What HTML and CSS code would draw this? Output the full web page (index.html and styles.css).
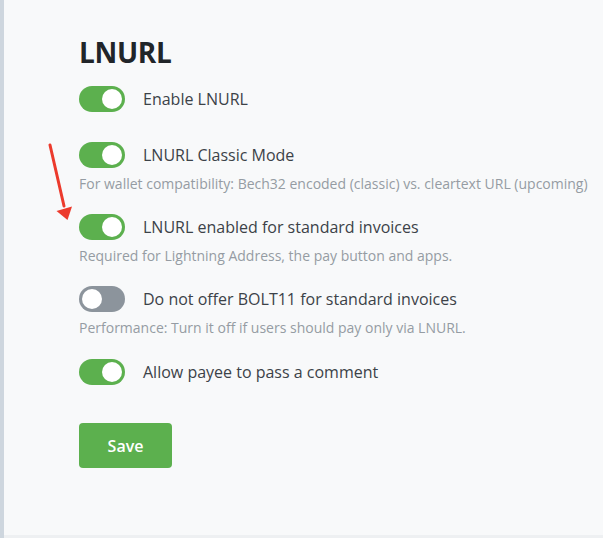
FILE: index.html
```html
<!DOCTYPE html>
<html>
<head>
<meta charset="utf-8">
<link rel="stylesheet" href="styles.css">
</head>
<body>
<div class="page">
  <div class="sidebar-edge"></div>
  <main class="content">
    <h2 class="title">LNURL</h2>
    <div class="group">
      <div class="row"><span class="toggle on"><span class="knob"></span></span><span class="label">Enable LNURL</span></div>
    </div>
    <div class="group has-help">
      <div class="row"><span class="toggle on"><span class="knob"></span></span><span class="label">LNURL Classic Mode</span></div>
      <div class="help">For wallet compatibility: Bech32 encoded (classic) vs. cleartext URL (upcoming)</div>
    </div>
    <div class="group has-help">
      <div class="row"><span class="toggle on"><span class="knob"></span></span><span class="label">LNURL enabled for standard invoices</span></div>
      <div class="help">Required for Lightning Address, the pay button and apps.</div>
    </div>
    <div class="group has-help">
      <div class="row"><span class="toggle off"><span class="knob"></span></span><span class="label">Do not offer BOLT11 for standard invoices</span></div>
      <div class="help">Performance: Turn it off if users should pay only via LNURL.</div>
    </div>
    <div class="group last">
      <div class="row"><span class="toggle on"><span class="knob"></span></span><span class="label">Allow payee to pass a comment</span></div>
    </div>
    <button class="save">Save</button>
  </main>
  <svg class="arrow" width="40" height="90" viewBox="0 0 40 90">
    <line x1="10" y1="5" x2="24" y2="66" stroke="#ec3a2c" stroke-width="3" stroke-linecap="round"/>
    <polygon points="16.5,71 32,66.5 27.5,80" fill="#ec3a2c"/>
  </svg>
  <div class="bottom-line"></div>
</div>
</body>
</html>
```
FILE: styles.css
```css
* { box-sizing: border-box; }
html, body { margin: 0; padding: 0; }
body {
  background: #f8f9fa;
  font-family: "Open Sans", "Liberation Sans", sans-serif;
  width: 603px;
  height: 538px;
  overflow: hidden;
}
.page {
  position: relative;
  display: flex;
  height: 538px;
}
.sidebar-edge {
  width: 4px;
  flex: none;
  background: #ced6de;
}
.content {
  flex: 1;
  padding: 31px 0 0 75px;
}
.title {
  margin: 0 0 15px 0;
  padding-top: 1px;
  height: 40px;
  font-size: 28px;
  font-weight: 700;
  letter-spacing: -0.3px;
  line-height: 40px;
  color: #212529;
}
.group { margin-bottom: 30px; }
.group.has-help { margin-bottom: 20px; }
.group.has-help:nth-child(5) { margin-bottom: 21px; }
.group.last { margin-bottom: 38px; }
.row {
  display: flex;
  align-items: center;
  gap: 18px;
  height: 26px;
}
.toggle {
  position: relative;
  width: 46px;
  height: 26px;
  border-radius: 13px;
  flex: none;
}
.toggle.on { background: #5cb04e; }
.toggle.off { background: #8c949c; }
.knob {
  position: absolute;
  top: 3px;
  width: 20px;
  height: 20px;
  border-radius: 50%;
  background: #fff;
}
.toggle.on .knob { left: 23px; }
.toggle.off .knob { left: 3px; }
.label {
  font-size: 16px;
  color: #3c4248;
}
.help {
  margin-top: 6px;
  font-size: 14px;
  line-height: 20px;
  color: #959ca3;
}
.save {
  display: block;
  width: 93px;
  height: 45px;
  border: none;
  border-radius: 4px;
  background: #5cb04e;
  color: #fff;
  font-family: "Open Sans", "Liberation Sans", sans-serif;
  font-size: 16px;
  font-weight: 600;
}
.arrow {
  position: absolute;
  left: 40px;
  top: 140px;
}
.bottom-line {
  position: absolute;
  left: 4px;
  right: 0;
  bottom: 0;
  height: 3px;
  background: #eef0f2;
}
```
